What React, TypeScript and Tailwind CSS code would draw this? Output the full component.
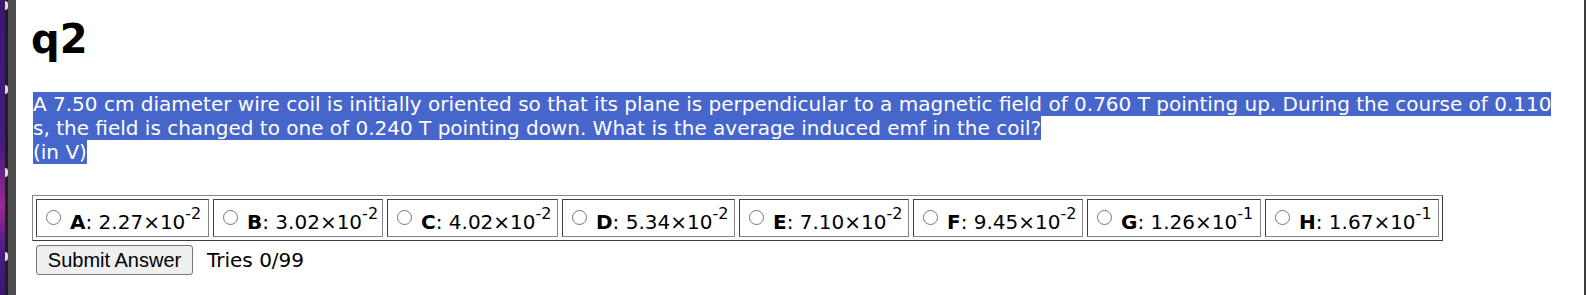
import React from "react";

/* ─── Data ───────────────────────────────────────────────────── */

interface Choice {
    letter: string;
    mantissa: string;
    exp: string;
    width: string;
}

const choices: Choice[] = [
    { letter: "A", mantissa: "2.27", exp: "-2", width: "w-[173px]" },
    { letter: "B", mantissa: "3.02", exp: "-2", width: "w-[170px]" },
    { letter: "C", mantissa: "4.02", exp: "-2", width: "w-[171px]" },
    { letter: "D", mantissa: "5.34", exp: "-2", width: "w-[173px]" },
    { letter: "E", mantissa: "7.10", exp: "-2", width: "w-[170px]" },
    { letter: "F", mantissa: "9.45", exp: "-2", width: "w-[170px]" },
    { letter: "G", mantissa: "1.26", exp: "-1", width: "w-[174px]" },
    { letter: "H", mantissa: "1.67", exp: "-1", width: "w-[174px]" },
];

/* ─── Page ───────────────────────────────────────────────────── */

export default function App() {
    return (
        <div className="flex w-[1586px] h-[295px] bg-white overflow-hidden font-['DejaVu_Sans',Verdana,sans-serif] text-black">
            {/* Left window edge */}
            <div className="w-[5px] shrink-0 bg-[linear-gradient(180deg,#3a176f_0%,#471b82_50%,#9a2a8e_70%,#4a1c86_85%,#3a176f_100%)]" />
            <div className="w-[3px] shrink-0 bg-[#1e1e1e] flex flex-col pt-[1px] gap-[74.5px]">
                <span className="block w-[3px] h-[9px] rounded-r-full bg-[#dedede]" />
                <span className="block w-[3px] h-[9px] rounded-r-full bg-[#dedede]" />
                <span className="block w-[3px] h-[9px] rounded-r-full bg-[#dedede]" />
                <span className="block w-[3px] h-[9px] rounded-r-full bg-[#dedede]" />
            </div>
            <div className="w-[8px] shrink-0 bg-[#4d4d4d]" />

            {/* Content */}
            <div className="flex-1 pl-[16px] pt-[15px]">
                <h1 className="text-[40px] leading-[48px] font-bold -ml-[1px]">q2</h1>

                <p className="mt-[29px] ml-[1px] text-[20px] leading-[24px] whitespace-nowrap">
                    <span className="bg-[#4766cc] text-white">
                        A 7.50 cm diameter wire coil is initially oriented so that its plane is
                        perpendicular to a magnetic field of 0.760 T pointing up. During the course of
                        0.110{" "}
                    </span>
                    <br />
                    <span className="bg-[#4766cc] text-white">
                        s, the field is changed to one of 0.240 T pointing down. What is the average
                        induced emf in the coil?
                    </span>
                    <br />
                    <span className="bg-[#4766cc] text-white">(in V)</span>
                </p>

                {/* Choices */}
                <div className="mt-[31px] inline-flex gap-[4px] p-[3px] border border-t-[#858585] border-l-[#858585] border-b-[#3c3c3c] border-r-[#3c3c3c]">
                    {choices.map((c) => (
                        <div
                            key={c.letter}
                            className={`${c.width} h-[38px] shrink-0 flex pl-[9px] whitespace-nowrap border border-t-[#404040] border-l-[#404040] border-b-[#858585] border-r-[#858585]`}
                        >
                            <span className="block mt-[10px] w-[15px] h-[15px] shrink-0 rounded-full border border-[#767676] bg-white" />
                            <span className="block ml-[9px] mt-[10px] text-[20px] leading-[24px]">
                                <b className="font-bold">{c.letter}</b>: {c.mantissa}×10
                                <sup className="text-[16px] -top-[10px]">{c.exp}</sup>
                            </span>
                        </div>
                    ))}
                </div>

                {/* Submit */}
                <div className="mt-[4px] ml-[4px] flex items-baseline gap-[14px]">
                    <button className="w-[157px] h-[30px] flex justify-center pt-[3px] bg-[#efefef] border border-[#767676] rounded-[3px] font-['Liberation_Sans',Arial,sans-serif] text-[20px] leading-[23px]">
                        Submit Answer
                    </button>
                    <span className="text-[20px] leading-[24px]">Tries 0/99</span>
                </div>
            </div>

            {/* Right edge */}
            <div className="w-[2px] shrink-0 bg-[#3c3c3c]" />
        </div>
    );
}
